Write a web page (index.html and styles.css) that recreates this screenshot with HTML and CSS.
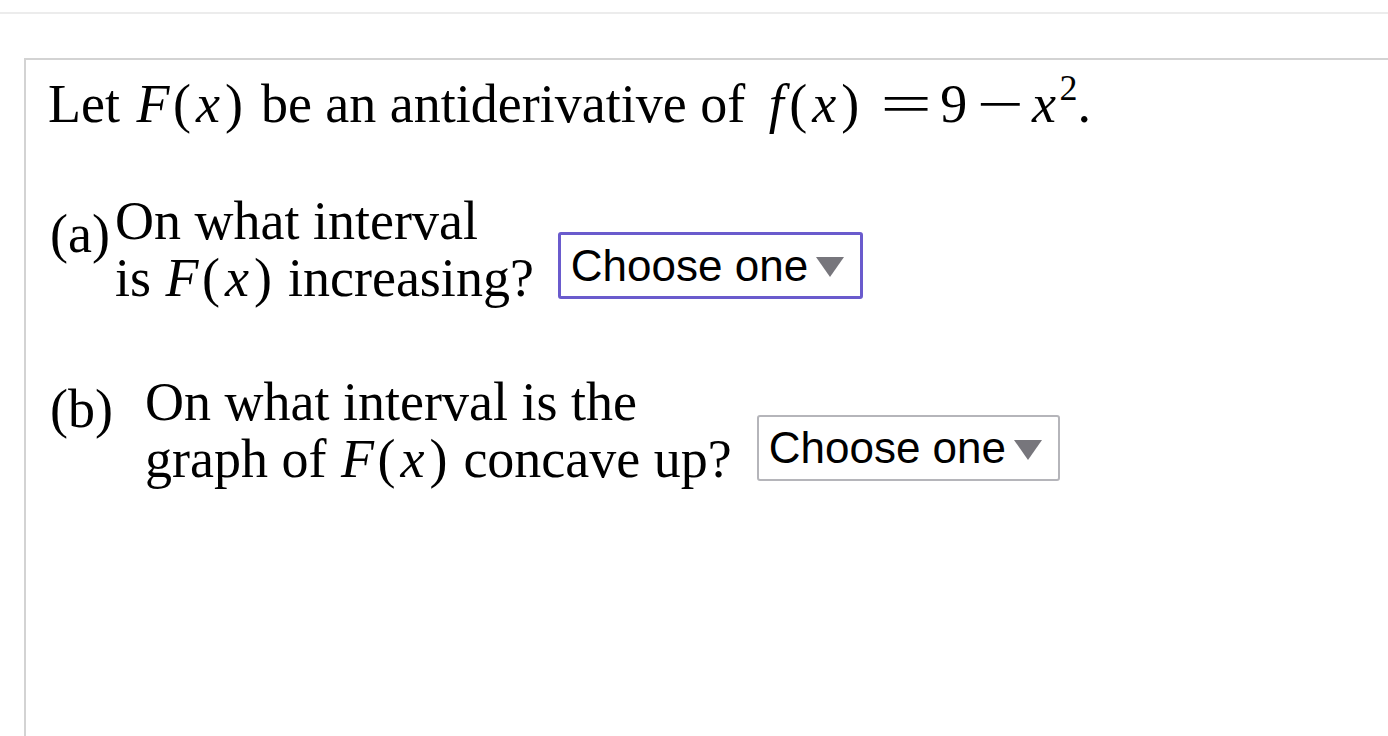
FILE: index.html
```html
<!DOCTYPE html>
<html>
<head>
<meta charset="utf-8">
<link rel="stylesheet" href="styles.css">
</head>
<body>
<div class="topline"></div>
<div class="card">
  <p class="intro">Let <span class="m"><i class="F">F</i><span class="p">(</span><i class="x">x</i><span class="p">)</span></span> be an antiderivative of <span class="m"><i class="f">f</i><span class="p">(</span><i class="x">x</i><span class="p">)</span><span class="op eq">=</span>9<span class="op minus">&minus;</span><i class="x">x</i><sup>2</sup>.</span></p>

  <div class="part part-a">
    <span class="label">(a)</span>
    <div class="q">
      <div class="line">On what interval</div>
      <div class="line row">
        <span>is <span class="m"><i class="F">F</i><span class="p">(</span><i class="x">x</i><span class="p">)</span></span> increasing?</span>
        <span class="select focus">Choose one<svg class="tri" viewBox="0 0 28 20" width="28" height="20"><polygon points="0,0 28,0 14,20" fill="#77767c"/></svg></span>
      </div>
    </div>
  </div>

  <div class="part part-b">
    <span class="label">(b)</span>
    <div class="q">
      <div class="line">On what interval is the</div>
      <div class="line row">
        <span>graph of <span class="m"><i class="F">F</i><span class="p">(</span><i class="x">x</i><span class="p">)</span></span> concave up?</span>
        <span class="select">Choose one<svg class="tri" viewBox="0 0 28 20" width="28" height="20"><polygon points="0,0 28,0 14,20" fill="#77767c"/></svg></span>
      </div>
    </div>
  </div>
</div>
</body>
</html>
```

FILE: styles.css
```css
html, body {
  margin: 0;
  padding: 0;
  background: #fff;
  overflow: hidden;
  height: 100%;
}

body {
  font-family: "Liberation Serif", "Times New Roman", serif;
  color: #000;
}

.topline {
  margin-top: 12px;
  border-top: 2px solid #ececec;
}

.card {
  margin-top: 44px;
  margin-left: 24px;
  border-top: 2px solid #d3d3d3;
  border-left: 2px solid #d3d3d3;
  height: 700px;
  padding: 16px 0 0 22px;
  box-sizing: border-box;
  font-size: 54px;
  line-height: 57px;
}

.intro {
  margin: 0;
  white-space: nowrap;
}

/* inline math */
.m {
  margin: 0 3px;
}

.part .m {
  margin: 0 1px;
}

i {
  font-style: italic;
}

.F {
  padding-right: 2px;
}

.f {
  padding: 0 4px 0 7px;
}

.x {
  padding: 0 3.5px;
}

.p {
  padding: 0 1.5px;
}

.op {
  display: inline-block;
  transform: scaleX(1.7);
}

.eq {
  margin: 0 19px 0 30px;
}

.minus {
  transform: scaleX(1.55);
  margin: 0 13px 0 18px;
}

sup {
  font-size: 36px;
  line-height: 0;
  vertical-align: 0;
  position: relative;
  top: -22px;
}

.part {
  display: flex;
  align-items: flex-start;
  margin-left: 2px;
  white-space: nowrap;
}

.part-a {
  margin-top: 60px;
}

.part-b {
  margin-top: 67px;
}

.label {
  flex: none;
}

.part-a .label {
  width: 65px;
  margin-top: 13px;
}

.part-b .label {
  width: 95px;
  margin-top: 7px;
}

.q {
  display: flex;
  flex-direction: column;
}

.row {
  display: flex;
  align-items: flex-start;
}

.select {
  display: inline-flex;
  align-items: center;
  box-sizing: border-box;
  height: 67px;
  width: 305px;
  padding: 0 14px 0 10px;
  gap: 8px;
  font-family: "Liberation Sans", Arial, Helvetica, sans-serif;
  font-size: 44px;
  line-height: 1;
  border: 2px solid #b5b5ba;
  border-radius: 3px;
  background: #fff;
}

.part-a .select {
  margin-top: -18px;
  margin-left: 24px;
}

.part-b .select {
  margin-top: -16px;
  margin-left: 25px;
  width: 303px;
  height: 66px;
}

.select.focus {
  border: 3px solid #6a5bcd;
}

.tri {
  flex: none;
  margin-top: 3px;
}
```
